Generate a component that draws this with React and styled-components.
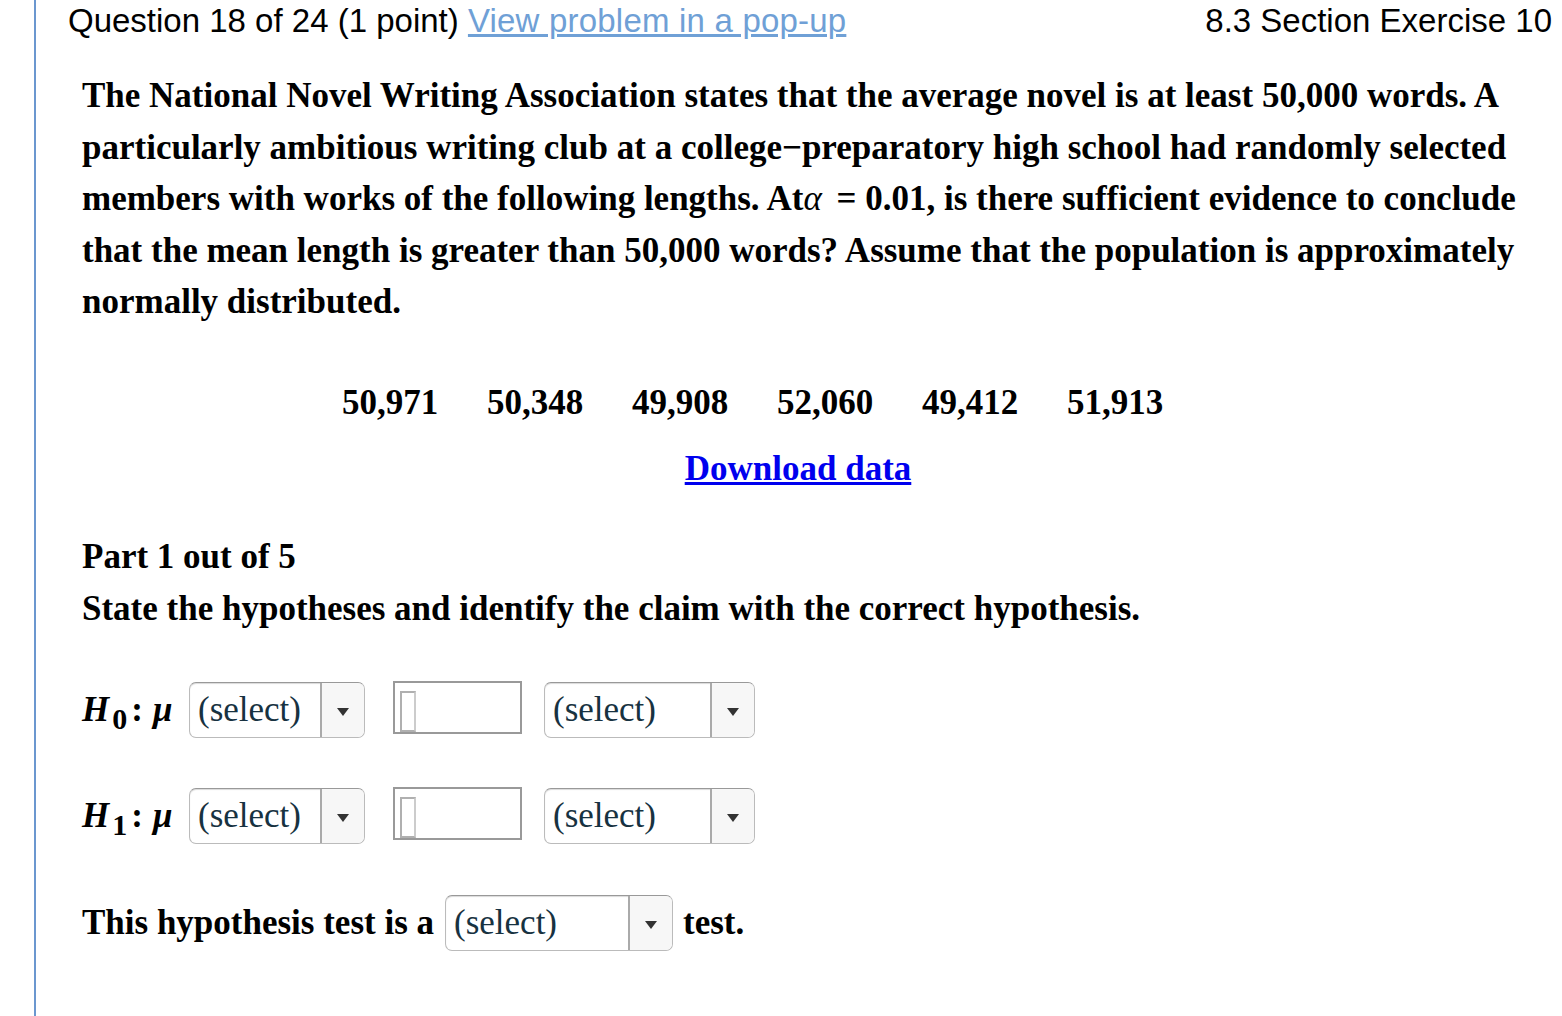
import React from 'react';
import styled, { createGlobalStyle } from 'styled-components';

const GlobalStyle = createGlobalStyle`
  html, body {
    margin: 0;
    padding: 0;
    background: #fff;
  }
`;

const numbers = ['50,971', '50,348', '49,908', '52,060', '49,412', '51,913'];

const Select = ({ width }) => (
  <SelectBox $width={width}>
    <SelectText>(select)</SelectText>
    <SelectArrow>
      <svg width="14" height="10" viewBox="0 0 14 10">
        <path d="M1 1 L13 1 L7 9 Z" fill="#333" />
      </svg>
    </SelectArrow>
  </SelectBox>
);

const Blank = () => (
  <InputBox>
    <Caret />
  </InputBox>
);

const Hypothesis = ({ sub }) => (
  <HypRow>
    <Label>
      <Var>H</Var>
      <Sub>{sub}</Sub>
      <Colon>:</Colon>
      <Var>μ</Var>
    </Label>
    <Select width={176} />
    <Blank />
    <Select width={211} />
  </HypRow>
);

export default function App() {
  return (
    <>
      <GlobalStyle />
      <Page>
        <Header>
          <div>
            Question 18 of 24 (1 point) <PopLink href="#">View problem in a pop-up</PopLink>
          </div>
          <div>8.3 Section Exercise 10</div>
        </Header>
        <Content>
          <Paragraph>
            The National Novel Writing Association states that the average novel is at least 50,000 words. A
            particularly ambitious writing club at a college−preparatory high school had randomly selected
            members with works of the following lengths. At<Alpha>α</Alpha> = 0.01, is there sufficient evidence to conclude
            that the mean length is greater than 50,000 words? Assume that the population is approximately
            normally distributed.
          </Paragraph>
          <Numbers>
            {numbers.map((n) => (
              <NumberCell key={n}>{n}</NumberCell>
            ))}
          </Numbers>
          <DownloadRow>
            <DownloadLink href="#">Download data</DownloadLink>
          </DownloadRow>
          <PartTitle>Part 1 out of 5</PartTitle>
          <Instruction>State the hypotheses and identify the claim with the correct hypothesis.</Instruction>
          <Hypothesis sub="0" />
          <Hypothesis sub="1" />
          <TestRow>
            <span>This hypothesis test is a</span>
            <Select width={228} />
            <TestEnd>test.</TestEnd>
          </TestRow>
        </Content>
      </Page>
    </>
  );
}

const Page = styled.div`
  margin-left: 34px;
  border-left: 2px solid #6b97cf;
  min-height: 1016px;
  box-sizing: border-box;
`;

const Header = styled.div`
  display: flex;
  justify-content: space-between;
  align-items: flex-start;
  padding: 2px 10px 0 32px;
  font-family: 'Liberation Sans', Arial, sans-serif;
  font-size: 33px;
  line-height: 38px;
  color: #000;
`;

const PopLink = styled.a`
  color: #6fa0d6;
  text-decoration: underline;
  letter-spacing: 0.2px;
`;

const Content = styled.div`
  padding: 30px 0 0 46px;
  font-family: 'Liberation Serif', 'Times New Roman', serif;
  font-weight: bold;
  font-size: 35px;
  color: #000;
`;

const Paragraph = styled.p`
  margin: 0;
  width: 1440px;
  line-height: 51.5px;
`;

const Alpha = styled.i`
  font-weight: normal;
  margin-right: 6px;
`;

const Numbers = styled.div`
  display: flex;
  gap: 50px;
  padding: 55px 0 0 260px;
  line-height: 40px;
`;

const NumberCell = styled.span`
  width: 95px;
  white-space: nowrap;
`;

const DownloadRow = styled.div`
  display: flex;
  justify-content: center;
  width: 1432px;
  padding-top: 26px;
  line-height: 40px;
`;

const DownloadLink = styled.a`
  color: #0000ee;
  text-decoration: underline;
`;

const PartTitle = styled.div`
  padding-top: 48px;
  line-height: 40px;
`;

const Instruction = styled.div`
  padding-top: 12px;
  line-height: 40px;
`;

const HypRow = styled.div`
  display: flex;
  align-items: center;
  margin-top: 53px;
  & + & {
    margin-top: 50px;
  }
`;

const Label = styled.div`
  display: flex;
  align-items: baseline;
  width: 107px;
  font-size: 35px;
  white-space: nowrap;
`;

const Var = styled.i`
  font-weight: bold;
`;

const Sub = styled.span`
  font-size: 30px;
  position: relative;
  top: 8px;
  margin-left: 3px;
`;

const Colon = styled.span`
  margin: 0 10px 0 4px;
`;

const SelectBox = styled.div`
  display: flex;
  width: ${(p) => p.$width}px;
  height: 56px;
  box-sizing: border-box;
  border: 1px solid #bbb;
  border-top-color: #999;
  border-radius: 7px;
  box-shadow: inset 0 1px 1px rgba(0, 0, 0, 0.15);
  overflow: hidden;
  font-weight: normal;
`;

const SelectText = styled.div`
  flex: 1;
  display: flex;
  align-items: center;
  padding-left: 8px;
  font-size: 35px;
  color: #173241;
  white-space: nowrap;
`;

const SelectArrow = styled.div`
  width: 42px;
  display: flex;
  align-items: center;
  justify-content: center;
  border-left: 2px solid #aaa;
  background: #f7f7f7;
  padding-top: 4px;
`;

const InputBox = styled.div`
  width: 129px;
  height: 53px;
  box-sizing: border-box;
  border: 2px solid #999;
  margin: -1px 22px 0 28px;
  padding: 8px 0 0 5px;
  align-self: flex-start;
`;

const Caret = styled.div`
  width: 12px;
  height: 37px;
  border: 2px solid #b0b0b0;
  border-right-color: #ccc;
`;

const TestRow = styled.div`
  display: flex;
  align-items: center;
  gap: 11px;
  margin-top: 51px;
`;

const TestEnd = styled.span`
  margin-left: -1px;
`;
